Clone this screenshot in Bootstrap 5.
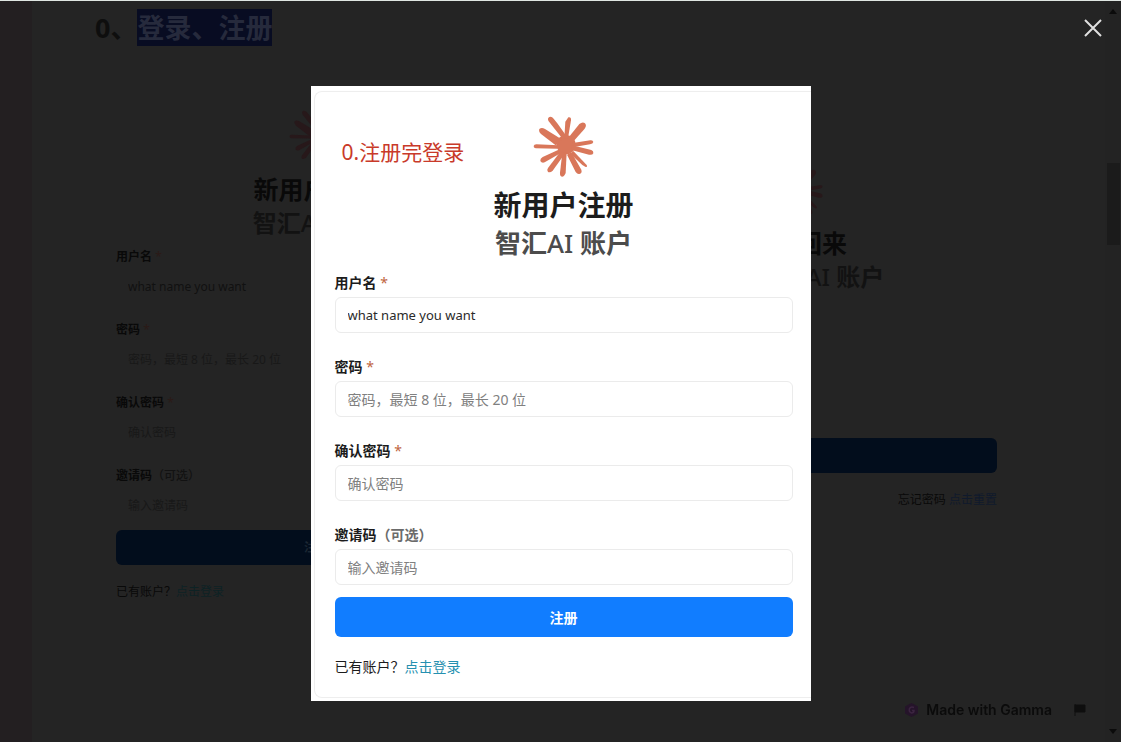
<!DOCTYPE html>
<html lang="zh-CN">
<head>
<meta charset="utf-8">
<meta name="viewport" content="width=device-width, initial-scale=1">
<title>登录、注册</title>
<link href="https://cdn.jsdelivr.net/npm/bootstrap@5.3.0/dist/css/bootstrap.min.css" rel="stylesheet">
<style>
body{font-family:"Noto Sans","Noto Sans CJK SC",sans-serif;font-size:14px;line-height:22px;background:#242424;color:#1c1c1c}
.shell{min-height:100vh;border-top:1px solid #dfe6e2;overflow:hidden}
.edge{width:32px;background:#231f21}
.doc{padding:0 66px 0 84px;color:#090909}
.doc-title{font-size:27px;line-height:34px;font-weight:700;margin:10px 0 0 -21px;color:#0e0e0e}
.doc-title mark{background:#080c22;color:#262a3c;padding:0}
.cols{gap:81px;padding-right:42px}
.col-left{padding-top:65px}
.col-right{padding-top:119px}
.dim-logo{width:54px;height:54px;color:#27181a}
.dim h2{font-size:25px;line-height:34px;font-weight:700;margin:8px 0 0}
.dim h3{font-size:24px;line-height:34px;font-weight:700;color:#121212;margin:0}
.dim{font-size:12px;line-height:20px}
.dim label{font-weight:700;display:block}
.dim .star{color:#2b1a17}
.dim .opt{color:#121212;font-weight:500}
.dim input{display:block;width:100%;height:31px;border:0;background:none;padding:0 12px;color:#111;font-size:12px;margin:4px 0 18px}
.dim input::placeholder{color:#181818;opacity:1}
.dim-fields{padding-top:7px}
.dim-btn{width:100%;height:35px;border:0;border-radius:6px;background:#020d1c;color:#1c2733;font-size:12px;font-weight:700;display:block}
.dim .before-btn{margin-bottom:9px}
.right-btn{margin-top:144px}
.dim a{color:#0d2224;text-decoration:none}
.dim .reset{color:#101a2c}
.dim-foot{margin-top:17px}
.bar{width:16px;background:#232323}
.thumb{height:82px;margin-top:149px;background:#1b1b1b;width:13px}
.lightbox{padding-top:86px;pointer-events:none}
.sheet{width:100%;max-width:500px;background:#fff;padding:5px 0 3px 3px;pointer-events:auto}
.sheet-in{border:1px solid #eee;border-right:0;border-radius:8px 0 0 8px;padding:24px 18px 19px 20px}
.note{left:31px;top:50px;font-size:21px;line-height:32px;color:#c93a2a}
.logo{width:62px;height:62px;color:#d9775a}
.sheet h1{font-size:28px;line-height:38px;font-weight:700;margin:8px 0 0}
.sheet h2{font-size:26px;line-height:38px;font-weight:700;color:#4c4c4c;margin:0 0 10px}
.latin{font-weight:500}
.sheet .form-label{font-weight:700;margin:0 0 3px;display:block}
.star{color:#c0653f;font-weight:400}
.opt{color:#6b6b6b}
.sheet .form-control{height:36px;font-size:14px;padding:0 12px;border-color:#ebebeb;border-radius:6px;color:#2a2a2a;margin-bottom:23px}
.sheet .form-control::placeholder{color:#808080;opacity:1}
.sheet .typed{font-size:13px}
.sheet .last{margin-bottom:12px}
.sheet .btn{height:40px;background:#117dff;border:0;border-radius:6px;color:#fff;font-size:14px;font-weight:700}
.foot{margin-top:19px}
.foot a{color:#2590b0;text-decoration:none}
.close-x{right:18px;top:18px;width:20px;height:20px;color:#e0e0e0}
.made{right:69px;bottom:22px;font:600 14px/20px Inter,sans-serif;color:#0b0b0b;text-decoration:none}
.flag{right:35px;bottom:24px;width:12px;height:16px;color:#0e0e0e}
</style>
</head>
<body>
<svg class="d-none" xmlns="http://www.w3.org/2000/svg">
  <symbol id="burst" viewBox="39 34 186 186">
    <g fill="currentColor"><circle cx="138" cy="120" r="29"/>
    <path d="M128 103 86 50Q81 41 88 37Q95 34 101 42L113 57 145 102Z"/>
    <path d="M133 100 136 51 145 38Q154 36 153 47L144 101Z"/>
    <path d="M145 99 178 58Q188 50 195 56Q201 63 194 72L156 115Z"/>
    <path d="M158 115 211 107Q219 106 220 112Q219 117 210 119L158 128Z"/>
    <path d="M156 122 214 136Q221 138 220 146Q217 152 207 150L154 136Z"/>
    <path d="M160 139 200 181Q203 187 197 187L187 181 151 147Z"/>
    <path d="M154 143 184 195Q187 204 180 207Q173 210 167 202L141 150Z"/>
    <path d="M140 143 137 205Q133 216 126 216Q119 214 120 204L127 144Z"/>
    <path d="M136 145 98 198Q91 205 84 202Q79 197 84 190L122 140Z"/>
    <path d="M124 144 74 173Q65 176 61 169Q60 162 68 157L119 134Z"/>
    <path d="M112 132 47 131Q40 129 41 124Q42 119 49 119L114 122Z"/>
    <path d="M107 122 63 88Q55 80 58 73Q65 67 75 73L127 105Z"/></g>
  </symbol>
</svg>

<div class="shell d-flex">
  <div class="edge flex-shrink-0"></div>
  <main class="doc flex-grow-1">
    <p class="doc-title">0、<mark>登录、注册</mark></p>
    <div class="cols d-flex">
      <section class="dim col-left flex-fill w-50">
        <div class="text-center">
          <svg class="dim-logo d-block mx-auto"><use href="#burst"/></svg>
          <h2>新用户注册</h2>
          <h3>智汇<span class="latin">AI</span> 账户</h3>
        </div>
        <div class="dim-fields">
          <label for="b1">用户名 <span class="star">*</span></label>
          <input id="b1" type="text" value="what name you want">
          <label for="b2">密码 <span class="star">*</span></label>
          <input id="b2" type="text" placeholder="密码，最短 8 位，最长 20 位">
          <label for="b3">确认密码 <span class="star">*</span></label>
          <input id="b3" type="text" placeholder="确认密码">
          <label for="b4">邀请码<span class="opt">（可选）</span></label>
          <input id="b4" class="before-btn" type="text" placeholder="输入邀请码">
          <button class="dim-btn" type="button">注册</button>
          <div class="dim-foot">已有账户？<a href="#">点击登录</a></div>
        </div>
      </section>
      <section class="dim col-right flex-fill w-50">
        <div class="text-center">
          <svg class="dim-logo d-block mx-auto"><use href="#burst"/></svg>
          <h2>欢迎回来</h2>
          <h3>登录智汇<span class="latin">AI</span> 账户</h3>
        </div>
        <button class="dim-btn right-btn" type="button" aria-label="登录"></button>
        <div class="dim-foot text-end">忘记密码 <a class="reset" href="#">点击重置</a></div>
      </section>
    </div>
  </main>
  <div class="bar flex-shrink-0 d-flex flex-column align-items-center pt-2">
    <svg width="8" height="5"><path d="M0 5 4 0 8 5Z" fill="#0b0b0b"/></svg>
    <div class="thumb"></div>
    <svg class="mt-auto mb-2" width="8" height="5"><path d="M0 0H8L4 5Z" fill="#0b0b0b"/></svg>
  </div>
</div>

<a class="made position-fixed d-flex align-items-center gap-2" href="#">
  <svg width="13" height="14" viewBox="0 0 13 14"><path d="M6.500 0 13 3.500V10.500L6.500 14 0 10.500V3.500Z" fill="#25142a"/><path d="M9 4.500Q6 3 4.500 5.500Q3.500 9 6.500 10Q9 10 9 7.500H7" fill="none" stroke="#3b2440" stroke-width="1.500"/></svg>
  <span>Made with Gamma</span>
</a>
<svg class="flag position-fixed" viewBox="0 0 12 16"><path d="M1 2V14M1 3H11V10H1Z" fill="currentColor" stroke="currentColor"/></svg>

<div class="lightbox position-absolute top-0 start-0 w-100 d-flex justify-content-center align-items-start">
  <div class="sheet position-relative" role="dialog" aria-labelledby="dlg">
    <span class="note position-absolute">0.注册完登录</span>
    <form class="sheet-in">
      <div class="text-center">
        <svg class="logo d-block mx-auto"><use href="#burst"/></svg>
        <h1 id="dlg">新用户注册</h1>
        <h2>智汇<span class="latin">AI</span> 账户</h2>
      </div>
      <label class="form-label" for="f1">用户名 <span class="star">*</span></label>
      <input class="form-control typed" id="f1" type="text" value="what name you want">
      <label class="form-label" for="f2">密码 <span class="star">*</span></label>
      <input class="form-control" id="f2" type="password" placeholder="密码，最短 8 位，最长 20 位">
      <label class="form-label" for="f3">确认密码 <span class="star">*</span></label>
      <input class="form-control" id="f3" type="password" placeholder="确认密码">
      <label class="form-label" for="f4">邀请码<span class="opt">（可选）</span></label>
      <input class="form-control last" id="f4" type="text" placeholder="输入邀请码">
      <button class="btn w-100" type="button">注册</button>
      <div class="foot">已有账户？<a href="#">点击登录</a></div>
    </form>
  </div>
</div>
<button class="close-x position-fixed border-0 bg-transparent p-0 d-flex" type="button" aria-label="关闭">
  <svg width="20" height="20" viewBox="0 0 20 20"><path d="M2 2 18 18M18 2 2 18" stroke="currentColor" stroke-width="2"/></svg>
</button>
<script src="https://cdn.jsdelivr.net/npm/bootstrap@5.3.0/dist/js/bootstrap.bundle.min.js"></script>
</body>
</html>
